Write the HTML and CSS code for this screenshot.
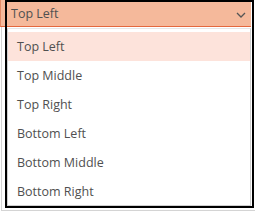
FILE: index.html
```html
<!DOCTYPE html>
<html lang="en">

<head>
    <meta charset="UTF-8">
    <title>Position dropdown</title>
    <link rel="stylesheet" href="styles.css">
</head>

<body>
    <div class="dropdown">
        <div class="select">
            <span>Top Left</span>
            <svg class="chevron" width="10" height="6" viewBox="0 0 10 6">
                <path d="M1 1 L5 5 L9 1" fill="none" stroke="#555" stroke-width="1.3" />
            </svg>
        </div>

        <ul class="options">
            <li class="selected">Top Left</li>
            <li>Top Middle</li>
            <li>Top Right</li>
            <li>Bottom Left</li>
            <li>Bottom Middle</li>
            <li>Bottom Right</li>
        </ul>
    </div>
</body>

</html>
```

FILE: styles.css
```css
body {
    margin: 0;
    font-family: 'Open Sans', 'Noto Sans', sans-serif;
    font-size: 12.5px;
    color: #505050;
    background-color: #fff;
}

.dropdown {
    position: relative;
    width: 255px;
    height: 212px;
}

/* faint panel behind the open list */
.dropdown::before {
    content: "";
    position: absolute;
    left: 1px;
    top: 27px;
    width: 253px;
    height: 183px;
    border-left: 1px solid #d4d4d4;
    border-bottom: 1px solid #d4d4d4;
}

/* black focus frame drawn over everything */
.dropdown::after {
    content: "";
    position: absolute;
    left: 5px;
    top: 0;
    width: 245px;
    height: 204px;
    border: 2px solid #000;
    pointer-events: none;
}

.select {
    display: flex;
    align-items: center;
    justify-content: space-between;
    box-sizing: border-box;
    width: 251px;
    height: 27px;
    padding: 0 5px 0 10px;
    background-color: #f5b99b;
    border-left: 1px solid #e38a66;
    border-bottom: 1px solid #e4683e;
}

.chevron {
    margin-top: 4px;
}

.options {
    position: relative;
    list-style: none;
    margin: 1px 0 0 7px;
    padding: 3px 0 0;
    box-sizing: border-box;
    width: 244px;
    height: 178px;
    border: 1px solid #cfcfcf;
    border-top-color: #e6e6e6;
}

.options li {
    height: 29px;
    line-height: 29px;
    padding-left: 9px;
}

.options li.selected {
    background-color: #fde3db;
}
```
